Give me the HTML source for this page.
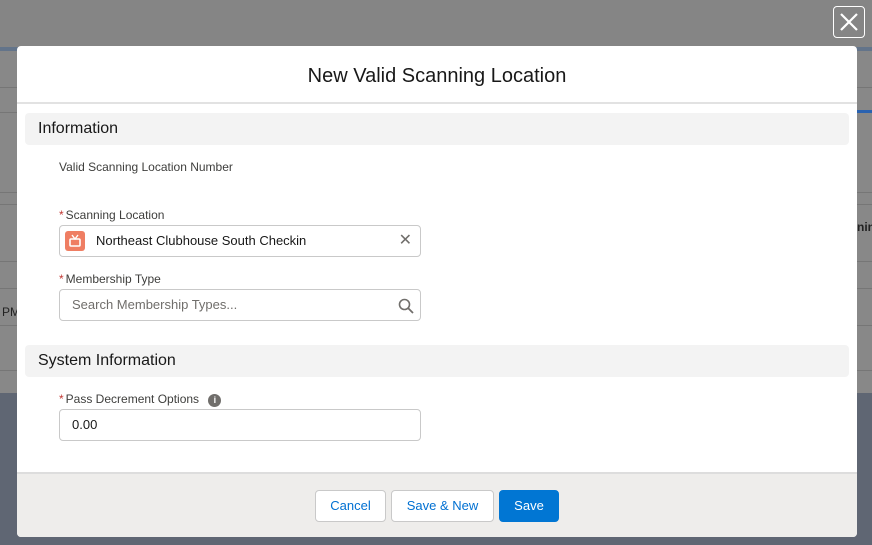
<!DOCTYPE html>
<html><head><meta charset="utf-8"><style>
*{box-sizing:border-box;margin:0;padding:0}
body{width:872px;height:545px;overflow:hidden;background:#858585;font-family:"Liberation Sans",sans-serif;position:relative}
.bg{position:absolute;left:0;top:47px;width:872px;height:346px;background:#888}
.bg2{position:absolute;left:0;top:393px;width:872px;height:152px;background:#5f6673}
.bgtop{position:absolute;left:0;top:47px;width:872px;height:4px;background:#63748a}
.ln{position:absolute;height:1px;background:#767676;left:0;width:872px}
.close{position:absolute;left:833px;top:6px;width:32px;height:32px;border:1px solid #fff;border-radius:4px}
.modal{position:absolute;left:17px;top:46px;width:840px;height:491px;background:#fff;border-radius:4px;overflow:hidden}
.hdr{height:58px;border-bottom:2px solid #e2e2e2;text-align:center;font-size:20px;color:#181818;line-height:60px}
.sec{position:absolute;left:8px;width:824px;height:32px;background:#f3f3f3;border-radius:4px;font-size:16px;color:#181818;padding-left:13px;line-height:32px}
.lbl{position:absolute;left:42px;font-size:12px;color:#3e3e3c}
.lbl b{color:#c23934;font-weight:normal;margin-right:2px}
.inp{position:absolute;left:42px;width:362px;height:32px;border:1px solid #c9c9c9;border-radius:4px;font-size:13px;color:#181818;line-height:30px;padding-left:12px}
.ftr{position:absolute;left:0;top:426px;width:840px;height:65px;background:#eeedeb;border-top:2px solid #ddd}
.btn{position:absolute;top:16px;height:32px;border:1px solid #c9c9c9;border-radius:4px;background:#fff;color:#0070d2;font-size:13px;line-height:30px;text-align:center}
</style></head><body>
<div class="bg"></div><div class="bgtop"></div><div class="bg2"></div>
<div class="ln" style="top:87px"></div><div class="ln" style="top:112px"></div>
<div class="ln" style="top:192px"></div><div class="ln" style="top:204px"></div>
<div class="ln" style="top:261px"></div><div class="ln" style="top:288px"></div>
<div class="ln" style="top:325px"></div><div class="ln" style="top:370px"></div>
<div style="position:absolute;left:2px;top:305px;font-size:12px;color:#222">PM</div>
<div style="position:absolute;left:857px;top:220px;font-size:12px;color:#222;font-weight:bold">nin</div>
<div style="position:absolute;left:857px;top:110px;width:15px;height:3px;background:#2a62b0"></div>
<div class="close"><svg width="30" height="30" viewBox="0 0 30 30"><path d="M7 7l16 16M23 7L7 23" stroke="#fff" stroke-width="2.2"/></svg></div>
<div class="modal">
<div class="hdr">New Valid Scanning Location</div>
<div class="sec" style="top:67px">Information</div>
<div class="lbl" style="top:114px">Valid Scanning Location Number</div>
<div class="lbl" style="top:162px"><b>*</b>Scanning Location</div>
<div class="inp" style="top:179px;padding-left:36px">
<div style="position:absolute;left:5px;top:5px;width:20px;height:20px;background:#ef7e63;border-radius:3px">
<svg width="20" height="20" viewBox="0 0 20 20"><rect x="5" y="8" width="10" height="7" rx="1" fill="none" stroke="#fff" stroke-width="1.6"/><path d="M7 4l3 4 3-4" fill="none" stroke="#fff" stroke-width="1.4"/></svg></div>
Northeast Clubhouse South Checkin
<span style="position:absolute;right:8px;top:0;font-size:16px;color:#706e6b">✕</span></div>
<div class="lbl" style="top:226px"><b>*</b>Membership Type</div>
<div class="inp" style="top:243px;color:#706e6b">Search Membership Types...
<svg style="position:absolute;right:6px;top:8px" width="16" height="16" viewBox="0 0 16 16"><circle cx="6.5" cy="6.5" r="5" fill="none" stroke="#706e6b" stroke-width="1.6"/><path d="M10 10l5 5" stroke="#706e6b" stroke-width="1.8"/></svg></div>
<div class="sec" style="top:299px">System Information</div>
<div class="lbl" style="top:346px"><b>*</b>Pass Decrement Options <span style="display:inline-block;width:13px;height:13px;border-radius:50%;background:#706e6b;color:#fff;font-size:9px;text-align:center;line-height:13px;margin-left:6px;font-weight:bold">i</span></div>
<div class="inp" style="top:363px">0.00</div>
<div class="ftr">
<div class="btn" style="left:298px;width:71px">Cancel</div>
<div class="btn" style="left:374px;width:103px">Save &amp; New</div>
<div class="btn" style="left:482px;width:60px;background:#0176d3;border-color:#0176d3;color:#fff">Save</div>
</div>
</div>
</body></html>
